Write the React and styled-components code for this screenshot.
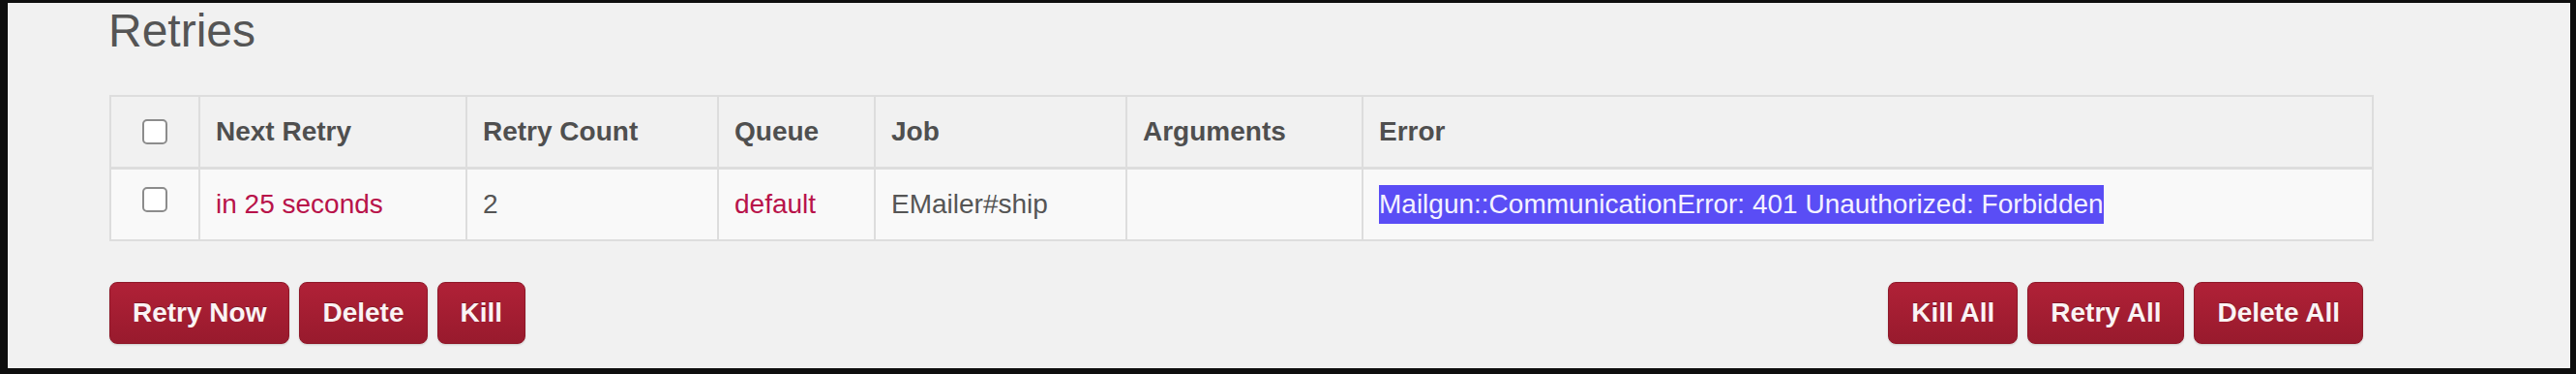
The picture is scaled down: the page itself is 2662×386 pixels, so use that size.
import styled, { createGlobalStyle } from "styled-components";

const GlobalStyle = createGlobalStyle`
  html, body {
    margin: 0;
    padding: 0;
    background: #0e0e0e;
  }
  body {
    font-family: "Liberation Sans", Arial, Helvetica, sans-serif;
  }
`;

const columns = [
  { title: "", width: 92 },
  { title: "Next Retry", width: 276 },
  { title: "Retry Count", width: 260 },
  { title: "Queue", width: 162 },
  { title: "Job", width: 260 },
  { title: "Arguments", width: 244 },
  { title: "Error", width: 1044 },
];

const retries = [
  {
    nextRetry: "in 25 seconds",
    count: 2,
    queue: "default",
    job: "EMailer#ship",
    args: "",
    error: "Mailgun::CommunicationError: 401 Unauthorized: Forbidden",
  },
];

export default function App() {
  return (
    <>
      <GlobalStyle />
      <StyledFrame>
        <StyledPage>
          <StyledTitle>Retries</StyledTitle>
          <StyledTable>
            <colgroup>
              {columns.map((col, i) => (
                <col key={i} style={{ width: col.width }} />
              ))}
            </colgroup>
            <thead>
              <tr>
                <StyledHeadCell $center>
                  <StyledCheckbox type="checkbox" $top={7} />
                </StyledHeadCell>
                {columns.slice(1).map((col) => (
                  <StyledHeadCell key={col.title}>{col.title}</StyledHeadCell>
                ))}
              </tr>
            </thead>
            <tbody>
              {retries.map((retry, i) => (
                <StyledRow key={i}>
                  <StyledCell $center>
                    <StyledCheckbox type="checkbox" $top={2} />
                  </StyledCell>
                  <StyledCell>
                    <StyledLink href="#">{retry.nextRetry}</StyledLink>
                  </StyledCell>
                  <StyledCell>{retry.count}</StyledCell>
                  <StyledCell>
                    <StyledLink href="#">{retry.queue}</StyledLink>
                  </StyledCell>
                  <StyledCell>{retry.job}</StyledCell>
                  <StyledCell>{retry.args}</StyledCell>
                  <StyledCell>
                    <StyledSelected>{retry.error}</StyledSelected>
                  </StyledCell>
                </StyledRow>
              ))}
            </tbody>
          </StyledTable>
          <StyledActions>
            <StyledButtonGroup>
              <StyledButton>Retry Now</StyledButton>
              <StyledButton>Delete</StyledButton>
              <StyledButton>Kill</StyledButton>
            </StyledButtonGroup>
            <StyledButtonGroup>
              <StyledButton>Kill All</StyledButton>
              <StyledButton>Retry All</StyledButton>
              <StyledButton>Delete All</StyledButton>
            </StyledButtonGroup>
          </StyledActions>
        </StyledPage>
      </StyledFrame>
    </>
  );
}

const StyledFrame = styled.div`
  box-sizing: border-box;
  height: 386px;
  padding: 3px 6px 6px 8px;
  background: #0e0e0e;
`;

const StyledPage = styled.div`
  box-sizing: border-box;
  height: 100%;
  padding: 0 205px 0 105px;
  background: #f1f1f1;
  display: flex;
  flex-direction: column;
  color: #555;
`;

const StyledTitle = styled.h3`
  margin: 3px 0 39px -1px;
  font-size: 48px;
  line-height: 1.1;
  font-weight: 400;
  color: #555;
`;

const StyledTable = styled.table`
  width: 2338px;
  table-layout: fixed;
  border-collapse: collapse;
  border: 2px solid #dddddd;
  font-size: 28px;
  line-height: 40px;
`;

const StyledHeadCell = styled.th`
  padding: 16px;
  text-align: ${(p) => (p.$center ? "center" : "left")};
  vertical-align: top;
  font-weight: 700;
  color: #4f4f4f;
  border-left: 2px solid #dddddd;
  border-bottom: 3px solid #dddddd;
  white-space: nowrap;
`;

const StyledRow = styled.tr`
  background: #f9f9f9;
`;

const StyledCell = styled.td`
  padding: 16px;
  text-align: ${(p) => (p.$center ? "center" : "left")};
  vertical-align: top;
  color: #555;
  border-left: 2px solid #dddddd;
  white-space: nowrap;
`;

const StyledCheckbox = styled.input`
  appearance: none;
  display: block;
  box-sizing: border-box;
  width: 26px;
  height: 26px;
  margin: ${(p) => p.$top}px auto 0;
  border: 2px solid #8c8c8c;
  border-radius: 5px;
  background: #ffffff;
`;

const StyledLink = styled.a`
  color: #b8134a;
  text-decoration: none;
`;

const StyledSelected = styled.span`
  display: inline-block;
  line-height: 40px;
  background: #5a4df5;
  color: #f4f2ff;
`;

const StyledActions = styled.div`
  display: flex;
  justify-content: space-between;
  margin-top: 42px;
  padding-right: 9px;
`;

const StyledButtonGroup = styled.div`
  display: flex;
  gap: 10px;
`;

const StyledButton = styled.button`
  box-sizing: border-box;
  height: 64px;
  padding: 0 23px;
  border: 1px solid #8e1828;
  border-radius: 8px;
  background: linear-gradient(#b02137, #981a2d);
  color: #fbf3f4;
  font-family: "Liberation Sans", Arial, Helvetica, sans-serif;
  font-size: 28px;
  font-weight: 700;
  line-height: 40px;
  text-shadow: 0 -1px 0 rgba(0, 0, 0, 0.25);
  box-shadow: 0 1px 2px rgba(0, 0, 0, 0.15);
  cursor: pointer;
`;
